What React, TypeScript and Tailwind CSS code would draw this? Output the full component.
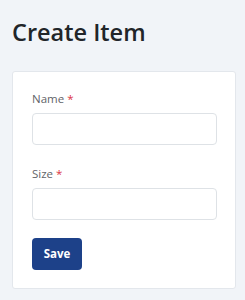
import React from "react";

export default function App() {
  return (
    <div className="min-h-[300px] w-[245px] bg-[#f1f4f8] pl-3 pt-[17px] pb-[10px]" style={{ fontFamily: '"Open Sans", "Noto Sans", sans-serif' }}>
      <h1 className="text-[23.5px] leading-[30px] font-semibold text-[#212529]">Create Item</h1>
      <div className="mt-[24px] w-[224px] rounded-[3px] border border-[#e3e7ec] bg-white pl-[19px] pr-[18px] pt-[19px] pb-[18px]">
        <div className="flex flex-col">
          <label className="text-[11.5px] leading-[16px] text-[#5f6368]">
            Name <span className="text-[#dc3545]">*</span>
          </label>
          <input className="mt-[6px] h-[32px] w-full rounded-[4px] border border-[#dee2e6] bg-white px-2 text-[12px] outline-none" />
        </div>
        <div className="mt-[21px] flex flex-col">
          <label className="text-[11.5px] leading-[16px] text-[#5f6368]">
            Size <span className="text-[#dc3545]">*</span>
          </label>
          <input className="mt-[6px] h-[32px] w-full rounded-[4px] border border-[#dee2e6] bg-white px-2 text-[12px] outline-none" />
        </div>
        <button className="mt-[18px] h-[32px] w-[50px] rounded-[4px] bg-[#1d4189] text-[11.5px] font-bold text-white">
          Save
        </button>
      </div>
    </div>
  );
}
